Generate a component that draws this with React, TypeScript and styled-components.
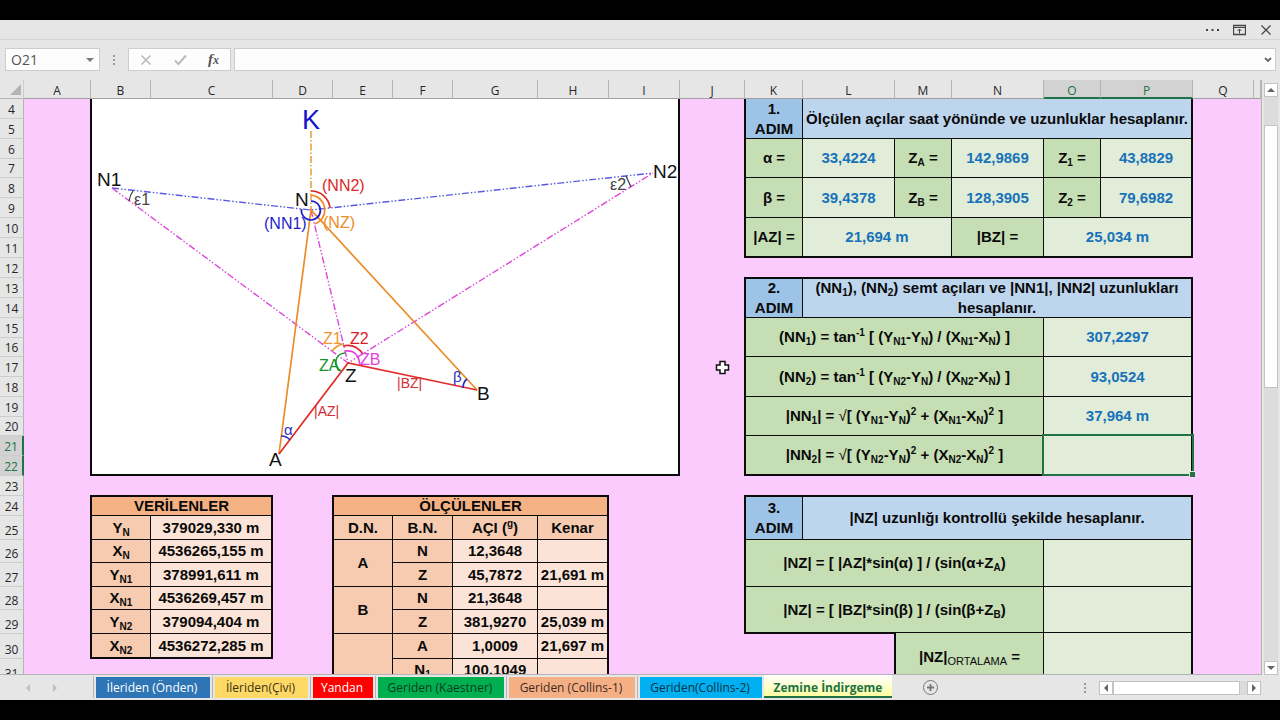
import React from "react";
import styled, { createGlobalStyle, css } from "styled-components";

const GlobalStyle = createGlobalStyle`
  *, *::before, *::after { box-sizing: border-box; }
  html, body { margin: 0; padding: 0; background: #000; }
  button, input { font: inherit; color: inherit; }
`;

const uiFont = `"Open Sans", "Noto Sans", sans-serif`;
const cellFont = `"Liberation Sans", Arial, sans-serif`;

const color = {
  chrome: "#e6e6e6",
  line: "#b4b4b4",
  softLine: "#cdcdcd",
  accent: "#217346",
  pink: "#fbcbfd",
  ink: "#0c0c0c",
};

/* ---------- window chrome ---------- */

const Screen = styled.div`
  display: flex;
  flex-direction: column;
  height: 100vh;
  padding: 20px 0;
  background: #000;
  font-family: ${uiFont};
`;

const Workbook = styled.main`
  display: flex;
  flex: 1;
  flex-direction: column;
  min-height: 0;
  background: ${color.chrome};
`;

const TitleBar = styled.header`
  display: flex;
  align-items: center;
  justify-content: flex-end;
  gap: 13px;
  height: 20px;
  padding: 0 7px;
  border-bottom: 1px solid #d4d4d4;
`;

const IconButton = styled.button`
  display: flex;
  align-items: center;
  justify-content: center;
  padding: 0;
  border: 0;
  background: none;
  color: #444;
`;

const FormulaBar = styled.div`
  display: flex;
  height: 40px;
  padding: 8px 4px 9px 5px;
`;

const NameBox = styled.label`
  display: flex;
  align-items: center;
  width: 95px;
  padding: 0 5px;
  border: 1px solid ${color.softLine};
  background: #fdfdfd;
`;

const BareInput = styled.input`
  flex: 1;
  min-width: 0;
  padding: 0;
  border: 0;
  outline: 0;
  background: none;
  color: #555;
  font-size: 14px;
`;

const Grip = styled.span`
  display: flex;
  align-items: center;
  justify-content: center;
  width: 28px;
`;

const FormulaActions = styled.div`
  display: flex;
  align-items: center;
  justify-content: space-between;
  width: 103px;
  margin-right: 3px;
  padding: 0 11px;
  border: 1px solid ${color.softLine};
  background: #fdfdfd;
`;

const FormulaField = styled.label`
  display: flex;
  flex: 1;
  align-items: center;
  padding: 0 3px;
  border: 1px solid ${color.softLine};
  background: #fdfdfd;
`;

const Fx = styled.span`
  color: #555;
  font-family: "Liberation Serif", serif;
  font-size: 15px;
  font-style: italic;
  font-weight: bold;
  line-height: 16px;
  small { font-size: 12px; }
`;

/* ---------- sheet ---------- */

const Body = styled.div`
  display: flex;
  flex: 1;
  min-height: 0;
`;

const columnWidths = [67, 60, 122, 60, 60, 60, 85, 71, 71, 65, 58, 92, 57, 92, 57, 92, 61];
const rowHeights = [
  20, 20, 20, 19, 20, 20, 20, 20, 20, 20, 20, 20, 19, 20, 20, 20, 19, 20, 20, 20, 20, 24, 23, 24,
  23, 24, 25, 24,
];
const px = (values: number[]) => values.map((v) => `${v}px`).join(" ");

const Sheet = styled.section`
  display: grid;
  flex: 1;
  min-width: 0;
  overflow: hidden;
  grid-template-columns: 24px ${px(columnWidths)} 1fr;
  grid-template-rows: 19px ${px(rowHeights)};
  border-right: 1px solid ${color.line};
  border-bottom: 1px solid ${color.line};
  background: ${color.pink};
`;

const Corner = styled.div`
  display: flex;
  grid-area: 1 / 1;
  align-items: flex-end;
  justify-content: flex-end;
  padding: 0 2px 3px 0;
  border-right: 1px solid ${color.softLine};
  border-bottom: 1px solid ${color.line};
  background: ${color.chrome};
`;

const ColumnHead = styled.div<{ $col: number; $on?: boolean }>`
  z-index: 2;
  grid-row: 1;
  grid-column: ${(p) => p.$col};
  border-right: 1px solid ${color.line};
  border-bottom: 1px solid #a0a0a0;
  background: ${color.chrome};
  color: #262626;
  font-size: 12px;
  line-height: 22px;
  text-align: center;
  ${(p) =>
    p.$on &&
    css`
      border-bottom: 2px solid ${color.accent};
      background: #d2d2d2;
      color: ${color.accent};
    `}
`;

const RowHead = styled.div<{ $row: number; $on?: boolean }>`
  display: flex;
  grid-row: ${(p) => p.$row};
  grid-column: 1;
  align-items: flex-end;
  justify-content: center;
  border-right: 1px solid ${color.line};
  border-bottom: 1px solid ${color.softLine};
  background: ${color.chrome};
  color: #262626;
  font-size: 12px;
  line-height: 16px;
  ${(p) =>
    p.$on &&
    css`
      border-right: 2px solid ${color.accent};
      background: #d2d2d2;
      color: ${color.accent};
    `}
`;

/* A block sits on the sheet's own tracks; $area is row / column / row end / column end. */
const Block = styled.table<{ $area: string; $joined?: boolean; $open?: boolean }>`
  display: grid;
  grid-area: ${(p) => p.$area};
  grid-template-rows: subgrid;
  grid-template-columns: subgrid;
  margin: -1px 0 0 -1px;
  border: 2px solid ${color.ink};
  font-family: ${cellFont};
  font-size: 15px;
  font-weight: bold;
  line-height: 20px;
  ${(p) => p.$open && css`margin-top: 0; border-top: 0;`}
  ${(p) => p.$joined && css`margin-top: -2px; border-top-width: 1px;`}
  thead, tbody, tr { display: contents; }
`;

type Tone = "step" | "title" | "label" | "value" | "head" | "key" | "data";
const toneFill: Record<Tone, string> = {
  step: "#9dc3e6",
  title: "#bdd5ed",
  label: "#c6deb4",
  value: "#e1edd9",
  head: "#f4b183",
  key: "#f6cbb0",
  data: "#fbe4d7",
};

const cellStyle = css<{ $tone: Tone; $edge?: boolean; $last?: boolean }>`
  display: flex;
  align-items: center;
  justify-content: center;
  min-width: 0;
  min-height: 0;
  padding: 0;
  overflow: hidden;
  border: 0 solid ${color.ink};
  border-right-width: ${(p) => (p.$edge ? 0 : 1)}px;
  border-bottom-width: ${(p) => (p.$last ? 0 : 1)}px;
  background: ${(p) => toneFill[p.$tone]};
  color: ${(p) => (p.$tone === "value" ? "#1872b9" : "#0a0a0a")};
  text-align: center;
  white-space: nowrap;
  sub, sup { font-size: 10px; line-height: 0; }
  sub { vertical-align: -3px; }
  sup { vertical-align: 6px; }
`;

const Td = styled.td<{ $tone: Tone; $edge?: boolean; $last?: boolean }>`
  ${cellStyle}
  grid-column: span ${(p) => p.colSpan || 1};
  grid-row: span ${(p) => p.rowSpan || 1};
`;

const Th = styled.th<{ $tone: Tone; $edge?: boolean; $last?: boolean }>`
  ${cellStyle}
  grid-column: span ${(p) => p.colSpan || 1};
  grid-row: span ${(p) => p.rowSpan || 1};
`;

const Light = styled.span`
  font-weight: normal;
`;

const LightSub = styled.sub`
  && { font-size: 11px; font-weight: normal; }
`;

const Figure = styled.figure`
  grid-area: 2 / 3 / 21 / 11;
  margin: 0 0 0 -1px;
  border: 2px solid ${color.ink};
  border-top: 0;
  background: #fff;
  svg { display: block; }
`;

const Selection = styled.div`
  position: relative;
  z-index: 1;
  grid-area: 19 / 16 / 21 / 18;
  margin: -2px -1px 0 -2px;
  border: 2px solid ${color.accent};
  &::after {
    position: absolute;
    right: -3px;
    bottom: -3px;
    width: 6px;
    height: 6px;
    border: 1px solid #e1edd9;
    border-width: 1px 0 0 1px;
    background: ${color.accent};
    content: "";
  }
`;

const Pointer = styled.svg`
  z-index: 3;
  grid-area: 15 / 11 / 16 / 12;
  align-self: center;
  justify-self: center;
  margin-left: 20px;
`;

/* ---------- scrolling and tabs ---------- */

const VerticalScroll = styled.div`
  display: flex;
  flex-direction: column;
  width: 18px;
  padding: 3px 2px 0;
`;

const ScrollButton = styled.button`
  display: flex;
  align-items: center;
  justify-content: center;
  width: 14px;
  height: 14px;
  padding: 0;
  border: 1px solid #c3c3c3;
  background: #fff;
`;

const VerticalTrack = styled.div`
  display: flex;
  flex: 1;
  flex-direction: column;
  padding-top: 28px;
  background: #dcdcdc;
`;

const VerticalThumb = styled.div`
  height: 49%;
  border: 1px solid #c3c3c3;
  background: #fff;
`;

const Footer = styled.footer`
  display: flex;
  align-items: stretch;
  height: 25px;
`;

const TabArrows = styled.div`
  display: flex;
  align-items: center;
  justify-content: center;
  gap: 19px;
  width: 93px;
  padding-right: 11px;
`;

const Tabs = styled.nav`
  display: flex;
  padding-bottom: 2px;
`;

const Tab = styled.button<{ $w: number; $fill: string; $ink: string; $active?: boolean }>`
  width: ${(p) => p.$w}px;
  padding: 1px 0 0;
  border: 2px solid ${color.chrome};
  border-left: 1px solid ${color.line};
  border-bottom-width: 0;
  background: ${(p) => p.$fill};
  background-clip: padding-box;
  box-shadow: inset 2px 0 0 ${color.chrome};
  color: ${(p) => p.$ink};
  font-size: 12px;
  line-height: 20px;
  text-align: center;
  white-space: nowrap;
  ${(p) =>
    p.$active &&
    css`
      padding-top: 3px;
      border: 0;
      border-bottom: 2px solid ${color.accent};
      box-shadow: none;
      font-weight: bold;
    `}
`;

const AddSheet = styled(IconButton)`
  margin-left: 30px;
`;

const HorizontalScroll = styled.div`
  display: flex;
  align-items: center;
  margin-left: auto;
  padding-right: 19px;
`;

const HorizontalTrack = styled.div`
  width: 134px;
  height: 14px;
  padding-right: 7px;
  background: #dcdcdc;
`;

const HorizontalThumb = styled.div`
  height: 100%;
  border: 1px solid #c3c3c3;
  background: #fff;
`;

type Direction = "up" | "down" | "left" | "right";
const trianglePath: Record<Direction, string> = {
  up: "M0 6 4 2l4 4z",
  down: "M0 2h8L4 6z",
  left: "M6 0v8L2 4z",
  right: "M2 0v8l4-4z",
};

function Triangle({ dir, fill = "#666" }: { dir: Direction; fill?: string }) {
  return (
    <svg width="8" height="8" viewBox="0 0 8 8" aria-hidden="true">
      <path d={trianglePath[dir]} fill={fill} />
    </svg>
  );
}

function Dots() {
  return (
    <svg width="2" height="12" viewBox="0 0 2 12" fill="#999" aria-hidden="true">
      <path d="M0 1h2v2H0zM0 5h2v2H0zM0 9h2v2H0z" />
    </svg>
  );
}

/* ---------- survey diagram ---------- */

const DiagramText = styled.text<{ $size: number }>`
  font-family: "Liberation Sans Narrow", "Liberation Sans", Arial, sans-serif;
  font-size: ${(p) => p.$size}px;
`;

type Mark = [text: string, x: number, y: number, size: number, fill: string];
const marks: Mark[] = [
  ["K", 302, 129, 27, "#1414c8"],
  ["N1", 97, 186, 19, "#111"],
  ["N2", 653, 178, 19, "#111"],
  ["ε1", 134, 205, 16, "#444"],
  ["ε2", 610, 190, 16, "#444"],
  ["N", 295, 206, 19, "#111"],
  ["(NN2)", 322, 191, 16, "#dc2828"],
  ["(NN1)", 264, 229, 16, "#1e1ec8"],
  ["(NZ)", 323, 228, 16, "#f08c28"],
  ["Z1", 323, 344, 16, "#f0962d"],
  ["Z2", 350, 344, 16, "#dc1e28"],
  ["ZA", 319, 371, 16, "#149628"],
  ["ZB", 360, 365, 16, "#e63cdc"],
  ["Z", 345, 382, 19, "#111"],
  ["|BZ|", 397, 388, 14, "#d22d32"],
  ["|AZ|", 314, 416, 14, "#d22d32"],
  ["B", 477, 400, 19, "#111"],
  ["A", 269, 466, 19, "#111"],
  ["α", 284, 435, 15, "#2832be"],
  ["β", 453, 382, 15, "#2832be"],
];

function Diagram() {
  return (
    <svg width="587" height="375" viewBox="92 99 587 375" role="img" aria-label="Zemine indirgeme krokisi">
      <g fill="none" strokeWidth="1.4">
        <path d="M112 188 311 210 653 173" stroke="#5a5adc" strokeDasharray="7 2 1.5 2 1.5 2" />
        <path d="M112 188 348 363 653 173M311 210 348 363" stroke="#dc46dc" strokeDasharray="7 2 1.5 2 1.5 2" />
        <path d="M311 131V210" stroke="#e6962d" strokeDasharray="7 2 1.5 2" />
        <g strokeWidth="1.7">
          <path d="M279 454 311 210 477 390" stroke="#eb8c28" />
          <path d="M279 454 348 363 477 390" stroke="#e12d2d" />
          <path d="M311 191a19 19 0 0 1 19 17" stroke="#dc2828" />
          <path d="M311 195a15 15 0 0 1 4 29" stroke="#f08c28" />
          <path d="M311 201a9.500 9.500 0 1 1-9.500 8" stroke="#1e1ec8" />
          <path d="M332 351q5-6 11-7" stroke="#f0962d" />
          <path d="M343 346q12-3 20 8" stroke="#dc2828" />
          <path d="M345 351q13-2 15 14" stroke="#e63cdc" />
          <path d="M345 353a9.500 9.500 0 0 0-4 18" stroke="#149628" />
          <path d="M281 436q6 0 9 4M467 379q-4 3-4 9" stroke="#2832be" />
          <path d="M133 191q-3 4-4 10M626 176l5 11" stroke="#333" strokeWidth="1.2" />
        </g>
      </g>
      {marks.map(([text, x, y, size, fill]) => (
        <DiagramText key={text} x={x} y={y} $size={size} fill={fill}>
          {text}
        </DiagramText>
      ))}
    </svg>
  );
}

/* ---------- data ---------- */

const columnNames = "ABCDEFGHIJKLMNOPQ".split("");
const rowNumbers = rowHeights.map((_, i) => i + 4);

const given: [string, string, string][] = [
  ["Y", "N", "379029,330 m"],
  ["X", "N", "4536265,155 m"],
  ["Y", "N1", "378991,611 m"],
  ["X", "N1", "4536269,457 m"],
  ["Y", "N2", "379094,404 m"],
  ["X", "N2", "4536272,285 m"],
];

const measured: { station?: string; span?: number; target: React.ReactNode; angle: string; side?: string }[] = [
  { station: "A", span: 2, target: "N", angle: "12,3648" },
  { target: "Z", angle: "45,7872", side: "21,691 m" },
  { station: "B", span: 2, target: "N", angle: "21,3648" },
  { target: "Z", angle: "381,9270", side: "25,039 m" },
  { station: " ", span: 2, target: "A", angle: "1,0009", side: "21,697 m" },
  { target: <>N<sub>1</sub></>, angle: "100,1049" },
];

const tabs = [
  { name: "İleriden (Önden)", w: 119, fill: "#2e75b6", ink: "#fff" },
  { name: "İleriden(Çivi)", w: 98, fill: "#ffd966", ink: "#3a3215" },
  { name: "Yandan", w: 65, fill: "#ff0000", ink: "#fff" },
  { name: "Geriden (Kaestner)", w: 131, fill: "#00b050", ink: "#0b3a20" },
  { name: "Geriden (Collins-1)", w: 131, fill: "#f4b084", ink: "#3d2a1e" },
  { name: "Geriden(Collins-2)", w: 127, fill: "#00b0f0", ink: "#0b2f45" },
  {
    name: "Zemine İndirgeme",
    w: 128,
    fill: "linear-gradient(#ffffff, #ffffa0)",
    ink: color.accent,
    active: true,
  },
];

function DirectionFormula({ n }: { n: string }) {
  return (
    <span>
      (NN<sub>{n}</sub>) = tan<sup>-1</sup> [ (Y<sub>N{n}</sub>-Y<sub>N</sub>) / (X<sub>N{n}</sub>-X<sub>N</sub>) ]
    </span>
  );
}

function LengthFormula({ n }: { n: string }) {
  return (
    <span>
      |NN<sub>{n}</sub>| = <Light>√</Light>[ (Y<sub>N{n}</sub>-Y<sub>N</sub>)<sup>2</sup> + (X<sub>N{n}</sub>-X
      <sub>N</sub>)<sup>2</sup> ]
    </span>
  );
}

function StepHead({ n, children }: { n: number; children: React.ReactNode }) {
  return (
    <thead>
      <tr>
        <Th $tone="step" rowSpan={2}>
          <span>{n}.<br />ADIM</span>
        </Th>
        <Th $tone="title" colSpan={5} rowSpan={2} $edge>
          <span>{children}</span>
        </Th>
      </tr>
    </thead>
  );
}

export default function App() {
  return (
    <>
      <GlobalStyle />
      <Screen>
        <Workbook>
          <TitleBar>
            <IconButton aria-label="Diğer">
              <svg width="15" height="12" viewBox="0 0 15 12" fill="currentColor">
                <path d="M1 5h2v2H1zM6.500 5h2v2h-2zM12 5h2v2h-2z" />
              </svg>
            </IconButton>
            <IconButton aria-label="Şerit görüntüleme">
              <svg width="13" height="12" viewBox="0 0 13 12" fill="none" stroke="currentColor">
                <path d="M.5 1.500h12v9H.5z" strokeWidth="1.300" />
                <path d="M.5 3.500h12M6.500 9.500V5M4.500 7l2-2 2 2" />
              </svg>
            </IconButton>
            <IconButton aria-label="Kapat">
              <svg width="14" height="12" viewBox="0 0 14 12" fill="none" stroke="currentColor" strokeWidth="1.200">
                <path d="M2.500 1.500l9 9M11.500 1.500l-9 9" />
              </svg>
            </IconButton>
          </TitleBar>

          <FormulaBar>
            <NameBox>
              <BareInput aria-label="Ad kutusu" defaultValue="O21" />
              <Triangle dir="down" fill="#777" />
            </NameBox>
            <Grip><Dots /></Grip>
            <FormulaActions>
              <IconButton aria-label="İptal">
                <svg width="12" height="12" viewBox="0 0 12 12" fill="none" stroke="#bbb" strokeWidth="1.600">
                  <path d="M1.500 1.500l9 9M10.500 1.500l-9 9" />
                </svg>
              </IconButton>
              <IconButton aria-label="Gir">
                <svg width="13" height="12" viewBox="0 0 13 12" fill="none" stroke="#bbb" strokeWidth="2">
                  <path d="M1 6.500l3.500 3.500L12 1.500" />
                </svg>
              </IconButton>
              <IconButton aria-label="İşlev ekle">
                <Fx>f<small>x</small></Fx>
              </IconButton>
            </FormulaActions>
            <FormulaField>
              <BareInput aria-label="Formül çubuğu" />
              <svg width="8" height="8" viewBox="0 0 8 8" fill="none" stroke="#666" strokeWidth="1.800" aria-hidden="true">
                <path d="M1 2l3 3 3-3" />
              </svg>
            </FormulaField>
          </FormulaBar>

          <Body>
            <Sheet>
              <Corner>
                <svg width="11" height="11" viewBox="0 0 11 11" aria-hidden="true">
                  <path d="M11 0v11H0z" fill="#b4b4b4" />
                </svg>
              </Corner>
              {columnNames.map((name, i) => (
                <ColumnHead key={name} $col={i + 2} $on={name === "O" || name === "P"}>
                  {name}
                </ColumnHead>
              ))}
              <ColumnHead $col={19} />
              {rowNumbers.map((n) => (
                <RowHead key={n} $row={n - 2} $on={n === 21 || n === 22}>
                  {n}
                </RowHead>
              ))}

              <Figure>
                <Diagram />
              </Figure>

              <Block $area="22 / 3 / 29 / 5">
                <thead>
                  <tr>
                    <Th $tone="head" colSpan={2} $edge>VERİLENLER</Th>
                  </tr>
                </thead>
                <tbody>
                  {given.map(([axis, point, value], i) => (
                    <tr key={axis + point}>
                      <Th $tone="key" $last={i === given.length - 1} scope="row">
                        <span>{axis}<sub>{point}</sub></span>
                      </Th>
                      <Td $tone="data" $edge $last={i === given.length - 1}>{value}</Td>
                    </tr>
                  ))}
                </tbody>
              </Block>

              <Block $area="22 / 6 / 30 / 10">
                <thead>
                  <tr>
                    <Th $tone="head" colSpan={4} $edge>ÖLÇÜLENLER</Th>
                  </tr>
                  <tr>
                    <Th $tone="key">D.N.</Th>
                    <Th $tone="key">B.N.</Th>
                    <Th $tone="key"><span>AÇI (<sup>g</sup>)</span></Th>
                    <Th $tone="key" $edge>Kenar</Th>
                  </tr>
                </thead>
                <tbody>
                  {measured.map((m) => (
                    <tr key={m.angle}>
                      {m.station && <Th $tone="key" rowSpan={m.span} scope="rowgroup">{m.station}</Th>}
                      <Th $tone="key" scope="row"><span>{m.target}</span></Th>
                      <Td $tone="data">{m.angle}</Td>
                      <Td $tone="data" $edge>{m.side}</Td>
                    </tr>
                  ))}
                </tbody>
              </Block>

              <Block $area="2 / 12 / 10 / 18" $open>
                <StepHead n={1}>Ölçülen açılar saat yönünde ve uzunluklar hesaplanır.</StepHead>
                <tbody>
                  <tr>
                    <Th $tone="label" rowSpan={2}>α =</Th>
                    <Td $tone="value" rowSpan={2}>33,4224</Td>
                    <Th $tone="label" rowSpan={2}><span>Z<sub>A</sub> =</span></Th>
                    <Td $tone="value" rowSpan={2}>142,9869</Td>
                    <Th $tone="label" rowSpan={2}><span>Z<sub>1</sub> =</span></Th>
                    <Td $tone="value" rowSpan={2} $edge>43,8829</Td>
                  </tr>
                  <tr>
                    <Th $tone="label" rowSpan={2}>β =</Th>
                    <Td $tone="value" rowSpan={2}>39,4378</Td>
                    <Th $tone="label" rowSpan={2}><span>Z<sub>B</sub> =</span></Th>
                    <Td $tone="value" rowSpan={2}>128,3905</Td>
                    <Th $tone="label" rowSpan={2}><span>Z<sub>2</sub> =</span></Th>
                    <Td $tone="value" rowSpan={2} $edge>79,6982</Td>
                  </tr>
                  <tr>
                    <Th $tone="label" rowSpan={2} $last>|AZ| =</Th>
                    <Td $tone="value" rowSpan={2} colSpan={2} $last>21,694 m</Td>
                    <Th $tone="label" rowSpan={2} $last>|BZ| =</Th>
                    <Td $tone="value" rowSpan={2} colSpan={2} $edge $last>25,034 m</Td>
                  </tr>
                </tbody>
              </Block>

              <Block $area="11 / 12 / 21 / 18">
                <StepHead n={2}>
                  (NN<sub>1</sub>), (NN<sub>2</sub>) semt açıları ve |NN1|, |NN2| uzunlukları
                  <br />
                  hesaplanır.
                </StepHead>
                <tbody>
                  <tr>
                    <Th $tone="label" rowSpan={2} colSpan={4}><DirectionFormula n="1" /></Th>
                    <Td $tone="value" rowSpan={2} colSpan={2} $edge>307,2297</Td>
                  </tr>
                  <tr>
                    <Th $tone="label" rowSpan={2} colSpan={4}><DirectionFormula n="2" /></Th>
                    <Td $tone="value" rowSpan={2} colSpan={2} $edge>93,0524</Td>
                  </tr>
                  <tr>
                    <Th $tone="label" rowSpan={2} colSpan={4}><LengthFormula n="1" /></Th>
                    <Td $tone="value" rowSpan={2} colSpan={2} $edge>37,964 m</Td>
                  </tr>
                  <tr>
                    <Th $tone="label" rowSpan={2} colSpan={4} $last><LengthFormula n="2" /></Th>
                    <Td $tone="value" rowSpan={2} colSpan={2} $edge $last />
                  </tr>
                </tbody>
              </Block>

              <Block $area="22 / 12 / 28 / 18">
                <StepHead n={3}>|NZ| uzunlığı kontrollü şekilde hesaplanır.</StepHead>
                <tbody>
                  <tr>
                    <Th $tone="label" rowSpan={2} colSpan={4}>
                      <span>|NZ| = [ |AZ|*sin(α) ] / (sin(α+Z<sub>A</sub>)</span>
                    </Th>
                    <Td $tone="value" rowSpan={2} colSpan={2} $edge />
                  </tr>
                  <tr>
                    <Th $tone="label" rowSpan={2} colSpan={4} $last>
                      <span>|NZ| = [ |BZ|*sin(β) ] / (sin(β+Z<sub>B</sub>)</span>
                    </Th>
                    <Td $tone="value" rowSpan={2} colSpan={2} $edge $last />
                  </tr>
                </tbody>
              </Block>

              <Block $area="28 / 14 / 30 / 18" $joined>
                <tbody>
                  <tr>
                    <Th $tone="label" rowSpan={2} colSpan={2} $last>
                      <span>|NZ|<LightSub>ORTALAMA</LightSub> =</span>
                    </Th>
                    <Td $tone="value" rowSpan={2} colSpan={2} $edge $last />
                  </tr>
                </tbody>
              </Block>

              <Selection />

              <Pointer width="15" height="15" viewBox="0 0 15 15" aria-hidden="true">
                <path
                  d="M5 1.500h5V5h3.500v5H10v3.500H5V10H1.500V5H5z"
                  fill="#fff"
                  stroke="#111"
                  strokeWidth="1.500"
                />
              </Pointer>
            </Sheet>

            <VerticalScroll>
              <ScrollButton aria-label="Yukarı kaydır"><Triangle dir="up" /></ScrollButton>
              <VerticalTrack>
                <VerticalThumb />
              </VerticalTrack>
              <ScrollButton aria-label="Aşağı kaydır"><Triangle dir="down" /></ScrollButton>
            </VerticalScroll>
          </Body>

          <Footer>
            <TabArrows>
              <Triangle dir="left" fill="#bdbdbd" />
              <Triangle dir="right" fill="#bdbdbd" />
            </TabArrows>
            <Tabs aria-label="Sayfalar">
              {tabs.map((t) => (
                <Tab key={t.name} $w={t.w} $fill={t.fill} $ink={t.ink} $active={t.active}>
                  {t.name}
                </Tab>
              ))}
            </Tabs>
            <AddSheet aria-label="Yeni sayfa">
              <svg width="17" height="17" viewBox="0 0 17 17" fill="none" stroke="#777">
                <circle cx="8.500" cy="8.500" r="7" />
                <path d="M8.500 5v7M5 8.500h7" strokeWidth="1.800" />
              </svg>
            </AddSheet>
            <HorizontalScroll>
              <Grip><Dots /></Grip>
              <ScrollButton aria-label="Sola kaydır"><Triangle dir="left" /></ScrollButton>
              <HorizontalTrack>
                <HorizontalThumb />
              </HorizontalTrack>
              <ScrollButton aria-label="Sağa kaydır"><Triangle dir="right" /></ScrollButton>
            </HorizontalScroll>
          </Footer>
        </Workbook>
      </Screen>
    </>
  );
}
